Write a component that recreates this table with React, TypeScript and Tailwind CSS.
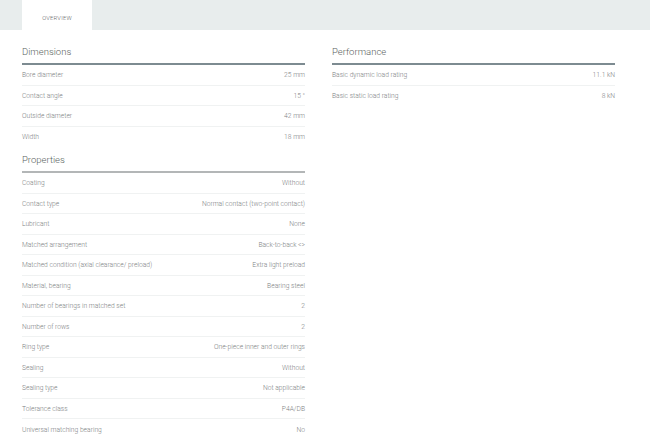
import React from "react";

type Row = [string, string];

const dimensions: Row[] = [
  ["Bore diameter", "25 mm"],
  ["Contact angle", "15 °"],
  ["Outside diameter", "42 mm"],
  ["Width", "18 mm"],
];

const properties: Row[] = [
  ["Coating", "Without"],
  ["Contact type", "Normal contact (two-point contact)"],
  ["Lubricant", "None"],
  ["Matched arrangement", "Back-to-back <>"],
  ["Matched condition (axial clearance/ preload)", "Extra light preload"],
  ["Material, bearing", "Bearing steel"],
  ["Number of bearings in matched set", "2"],
  ["Number of rows", "2"],
  ["Ring type", "One-piece inner and outer rings"],
  ["Sealing", "Without"],
  ["Sealing type", "Not applicable"],
  ["Tolerance class", "P4A/DB"],
  ["Universal matching bearing", "No"],
];

const performance: Row[] = [
  ["Basic dynamic load rating", "11.1 kN"],
  ["Basic static load rating", "8 kN"],
];

function Section({ title, rows, line }: { title: string; rows: Row[]; line: string }) {
  return (
    <div>
      <div className={`h-[26px] pt-[6px] pb-[4px] border-b-2 ${line}`}>
        <div className="text-[9.5px] leading-[14px] font-light text-[#5a5f61]">{title}</div>
      </div>
      {rows.map(([k, v], i) => (
        <div
          key={k}
          className={`h-[20.5px] pt-[1.5px] flex items-center justify-between text-[6.7px] font-light text-[#7c8082] ${
            i < rows.length - 1 ? "border-b border-[#f0f2f2]" : ""
          }`}
        >
          <span>{k}</span>
          <span>{v}</span>
        </div>
      ))}
    </div>
  );
}

export default function App() {
  return (
    <div
      className="w-[650px] h-[442px] bg-white overflow-hidden"
      style={{ fontFamily: "Roboto, 'Open Sans', sans-serif" }}
    >
      <div className="h-[30px] bg-[#e8eded] flex pl-[22px]">
        <div className="w-[70px] h-full bg-white flex items-center justify-center pt-[7px] text-[5.8px] font-light tracking-[0.2px] text-[#5f6466]">
          OVERVIEW
        </div>
      </div>
      <div className="flex gap-[27px] pl-[22px] pt-[9px]">
        <div className="w-[283px]">
          <Section title="Dimensions" rows={dimensions} line="border-[#7d8b91]" />
          <Section title="Properties" rows={properties} line="border-[#b3b6b7]" />
        </div>
        <div className="w-[283px]">
          <Section title="Performance" rows={performance} line="border-[#7d8b91]" />
        </div>
      </div>
    </div>
  );
}
